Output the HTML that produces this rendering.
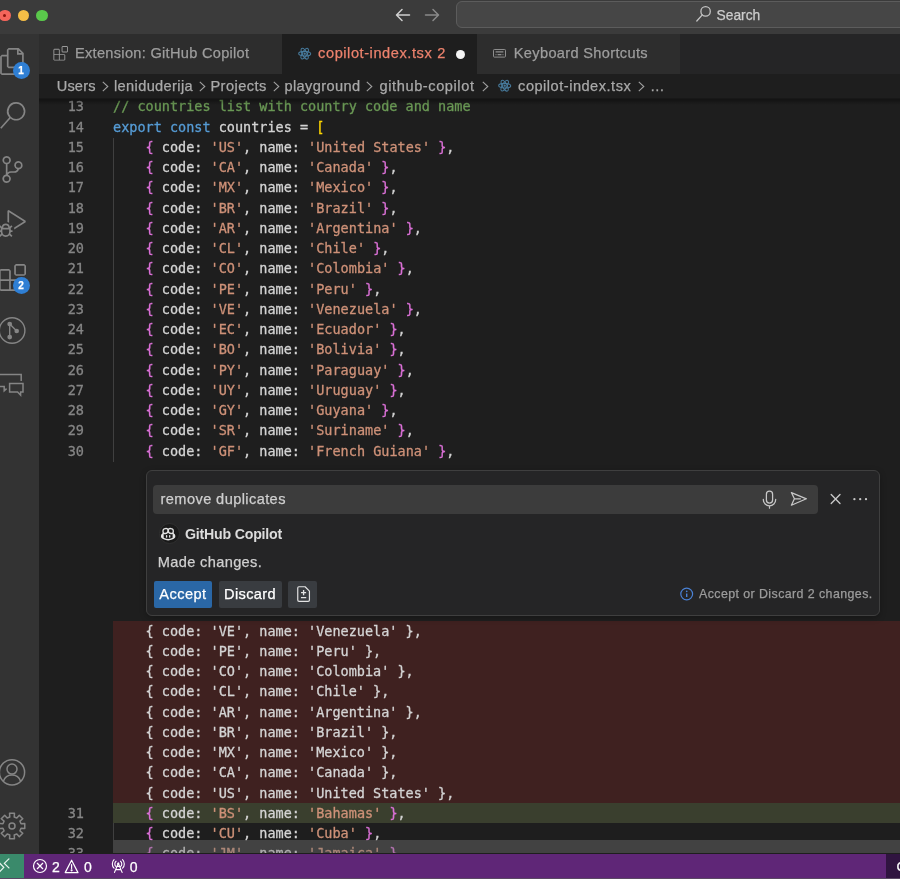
<!DOCTYPE html>
<html><head><meta charset="utf-8"><title>copilot-index.tsx</title>
<style>
*{box-sizing:border-box;margin:0;padding:0}
html,body{width:900px;height:879px;overflow:hidden;background:#1e1e1e}
body{position:relative;will-change:transform;-webkit-text-stroke:0.25px;font-family:"Liberation Sans",sans-serif;color:#ccc}
.abs{position:absolute}
svg{position:absolute;overflow:visible}
#title{left:0;top:0;width:900px;height:34px;background:#3b3b3b}
.tl{position:absolute;top:9.7px;width:11.6px;height:11.6px;border-radius:50%}
#search{left:456px;top:1px;width:470px;height:27px;border-radius:6px;background:#464646;border:1px solid #5c5c5c}
#search span{position:absolute;left:259.5px;top:1.7px;line-height:24.5px;font-size:13.8px;color:#ccc}
#act{left:0;top:34px;width:39px;height:820px;background:#333}
.badge{position:absolute;width:17px;height:17px;border-radius:50%;background:#2f7fd4;color:#fff;font-size:10px;font-weight:bold;text-align:center;line-height:17px}
#tabs{left:39px;top:34px;width:861px;height:40px;background:#252526}
.tab{position:absolute;top:0;height:40px;background:#2d2d2d;font-size:14.5px;line-height:39.2px;color:#9d9d9d;white-space:nowrap}
.tab span{position:absolute;top:0}
.tab.active{background:#1e1e1e;color:#ec826d}
#crumbs{left:39px;top:74px;width:861px;height:24px;background:#1e1e1e;font-size:14.5px;line-height:24px;color:#a9a9a9;white-space:nowrap}
#crumbs span{position:absolute;top:0}
#shadow{left:39px;top:97.5px;width:861px;height:7px;background:linear-gradient(rgba(0,0,0,.15) 0,rgba(0,0,0,.38) 25%,rgba(0,0,0,.2) 55%,rgba(0,0,0,0) 100%)}
#code{left:39px;top:0;width:861px;height:853px;font-family:"DejaVu Sans Mono","Liberation Mono",monospace;font-size:13.5px;line-height:20.25px;color:#d4d4d4;white-space:pre;overflow:hidden;-webkit-text-stroke:0.3px}
.ln{position:absolute;left:0;width:861px;height:20.25px}
.ln .n{position:absolute;left:0;width:45px;text-align:right;color:#858585}
.ln .c{position:absolute;left:74px}
.p{color:#da70d6}.y{color:#ffd700}.s{color:#ce9178}.k{color:#569cd6}.cm{color:#6a9955}.v{color:#d4d4d4}
.bg{position:absolute;left:74.3px;width:790px}
.guide{position:absolute;left:74px;width:1px;background:#404040}
#widget{left:146px;top:470px;width:734px;height:146px;border-radius:6px;background:#252526;border:1px solid #3f3f3f;font-size:14.5px;color:#ccc;box-shadow:0 2px 6px rgba(0,0,0,.25)}
#widget .abs{white-space:nowrap}
.row span,.btn span{position:absolute;top:0}
#input{left:7px;top:14.5px;width:665px;height:28.5px;border-radius:4px;background:#3c3c3c}
.btn{position:absolute;top:110.5px;height:26.5px;border-radius:2px;line-height:26.5px;text-align:center;color:#fff}
#status{left:0;top:853.7px;width:900px;height:24.3px;background:#5f2677;color:#fff;font-size:13.5px;line-height:26px}
#status span{position:absolute;top:0}
</style></head><body>
<div id="title" class="abs">
  <div class="tl" style="left:-1px;background:#f4655b"><div class="abs" style="left:4.1px;top:4.1px;width:3.4px;height:3.4px;border-radius:50%;background:#8a140c"></div></div>
  <div class="tl" style="left:17.7px;background:#f5be46"></div>
  <div class="tl" style="left:36.2px;background:#5ac84b"></div>
  <svg style="left:395px;top:8px" width="46" height="14" viewBox="0 0 46 14" fill="none" stroke-linecap="round" stroke-linejoin="round" stroke-width="1.5"><path d="M7 1.5 L1.5 7 L7 12.5 M1.8 7 H14.5" stroke="#d0d0d0"/><path d="M38 1.5 L43.5 7 L38 12.5 M43.2 7 H30.5" stroke="#8a8a8a"/></svg>
  <div id="search" class="abs"><svg style="left:238px;top:2.5px" width="18" height="18" viewBox="0 0 18 18" fill="none" stroke="#c4c4c4" stroke-width="1.3" stroke-linecap="round"><circle cx="10.6" cy="6.4" r="4.7"/><path d="M7.3 9.9 L1.8 16"/></svg><span>Search</span></div>
</div>
<div id="act" class="abs">
<svg style="left:-1.5px;top:13.5px" width="27" height="27" viewBox="0 0 24 24" fill="#858585"><path d="M17.5 0h-9L7 1.5V6H2.5L1 7.5v15.07L2.5 24h12.07L16 22.57V18h4.7l1.3-1.43V4.5L17.5 0zm0 2.12l2.38 2.38H17.5V2.12zm-3 20.38h-12v-15H7v9.07L8.5 18h6v4.5zm6-6h-12v-15H16V6h4.5v10.5z"/></svg>
<svg style="left:-1.5px;top:67.5px" width="27" height="27" viewBox="0 0 24 24" fill="#858585"><path d="M15.25 0a8.25 8.25 0 0 0-6.18 13.72L1 22.88l1.12 1 8.05-9.12A8.251 8.251 0 1 0 15.25.01V0zm0 15a6.75 6.75 0 1 1 0-13.5 6.75 6.75 0 0 1 0 13.5z"/></svg>
<svg style="left:-1.5px;top:121.5px" width="27" height="27" viewBox="0 0 24 24" fill="#858585"><path d="M21.007 8.222A3.738 3.738 0 0 0 15.045 5.2a3.737 3.737 0 0 0 1.156 6.583 2.988 2.988 0 0 1-2.668 1.67h-2.99a4.456 4.456 0 0 0-2.989 1.165V7.4a3.737 3.737 0 1 0-1.494 0v9.117a3.776 3.776 0 1 0 1.816.099 2.99 2.99 0 0 1 2.668-1.667h2.99a4.484 4.484 0 0 0 4.223-3.039 3.736 3.736 0 0 0 3.25-3.687zM4.565 3.738a2.242 2.242 0 1 1 4.484 0 2.242 2.242 0 0 1-4.484 0zm4.484 16.441a2.242 2.242 0 1 1-4.484 0 2.242 2.242 0 0 1 4.484 0zm8.221-9.715a2.242 2.242 0 1 1 0-4.485 2.242 2.242 0 0 1 0 4.485z"/></svg>
<svg style="left:-1.5px;top:175.5px" width="27" height="27" viewBox="0 0 24 24" fill="#858585"><path d="M10.94 13.5l-1.32 1.32a3.73 3.73 0 0 0-7.24 0L1.06 13.5 0 14.56l1.72 1.72-.22.22V18H0v1.5h1.5v.08c.077.489.214.966.41 1.42L0 22.94 1.06 24l1.65-1.65A4.308 4.308 0 0 0 6 24a4.31 4.31 0 0 0 3.29-1.65L10.94 24 12 22.94 10.09 21c.198-.464.336-.951.41-1.45v-.1H12V18h-1.5v-1.5l-.22-.22L12 14.56l-1.06-1.06zM6 13.5a2.25 2.25 0 0 1 2.25 2.25h-4.5A2.25 2.25 0 0 1 6 13.5zm3 6a3.33 3.33 0 0 1-3 3 3.33 3.33 0 0 1-3-3v-2.25h6v2.25zm14.76-9.9v1.26L13.5 17.37V15.6l8.5-5.37L9 2v9.46a5.07 5.07 0 0 0-1.5-.72V.63L8.64 0l15.12 9.6z"/></svg>
<svg style="left:-1.5px;top:229.5px" width="27" height="27" viewBox="0 0 24 24" fill="#858585"><path d="M13.5 1.5L15 0h7.5L24 1.5V9l-1.5 1.5H15L13.5 9V1.5zm1.5 0V9h7.5V1.5H15zM0 15V6l1.5-1.5H9L10.5 6v7.5H18l1.5 1.5v7.5L18 24H1.5L0 22.5V15zm9-1.5V6H1.5v7.5H9zM9 15H1.5v7.5H9V15zm1.5 7.5H18V15h-7.5v7.5z"/></svg>
<svg style="left:0;top:0" width="39" height="820"><g fill="none" stroke="#858585" stroke-width="1.4"><circle cx="12.1" cy="296.5" r="12.8"/><path d="M9.7 290.1 V303.1 M9.7 290.1 L16.7 297.0"/></g><g fill="#858585"><circle cx="9.7" cy="290.1" r="2.4"/><circle cx="16.7" cy="297.0" r="2.3"/><circle cx="9.7" cy="303.1" r="2.4"/></g>
<g fill="none" stroke="#858585" stroke-width="1.5" stroke-linejoin="miter"><path d="M21.2 347.0 V340.6 H-1 V352.4 H4.2 V356.8 L6.6 354.6"/><path d="M9.6 349.6 H23 V358.0 H20.6 V361.2 L17.6 358.0 H9.6 Z"/></g>
<g fill="none" stroke="#858585" stroke-width="1.5"><circle cx="12" cy="738.3" r="12.6"/><circle cx="12" cy="735.1" r="5"/><path d="M3.4 747.3 A9 9 0 0 1 20.6 747.3"/></g>
<g fill="none" stroke="#858585" stroke-width="1.5" stroke-linejoin="round"><path d="M9.79 782.97 L9.54 779.23 L14.46 779.23 L14.21 782.97 L16.82 784.05 L19.29 781.24 L22.76 784.71 L19.95 787.18 L21.03 789.79 L24.77 789.54 L24.77 794.46 L21.03 794.21 L19.95 796.82 L22.76 799.29 L19.29 802.76 L16.82 799.95 L14.21 801.03 L14.46 804.77 L9.54 804.77 L9.79 801.03 L7.18 799.95 L4.71 802.76 L1.24 799.29 L4.05 796.82 L2.97 794.21 L-0.77 794.46 L-0.77 789.54 L2.97 789.79 L4.05 787.18 L1.24 784.71 L4.71 781.24 L7.18 784.05 Z"/><circle cx="12.0" cy="792.0" r="3"/></g></svg>
<div class="badge" style="left:12.5px;top:27.9px">1</div>
<div class="badge" style="left:12.5px;top:243.0px">2</div>
</div>
<div id="tabs" class="abs">
<div class="tab" style="left:0;width:242.6px"><svg style="left:14.1px;top:12.0px" width="15.4" height="14.6" viewBox="0 0 24 24" fill="#9a9a9a"><path d="M13.5 1.5L15 0h7.5L24 1.5V9l-1.5 1.5H15L13.5 9V1.5zm1.5 0V9h7.5V1.5H15zM0 15V6l1.5-1.5H9L10.5 6v7.5H18l1.5 1.5v7.5L18 24H1.5L0 22.5V15zm9-1.5V6H1.5v7.5H9zM9 15H1.5v7.5H9V15zm1.5 7.5H18V15h-7.5v7.5z"/></svg><span style="left:36.0px;font-size:14.6px;letter-spacing:0.29px;">Extension: GitHub Copilot</span></div>
<div class="tab active" style="left:242.6px;width:195.2px"><svg style="left:16.5px;top:13.1px" width="13.4" height="13.4" viewBox="-8 -8 16 16" fill="none" stroke="#477a9c" stroke-width="1.25"><ellipse rx="7.2" ry="2.8"/><ellipse rx="7.2" ry="2.8" transform="rotate(60)"/><ellipse rx="7.2" ry="2.8" transform="rotate(120)"/><circle r="1.4" fill="#477a9c" stroke="none"/></svg><span style="left:36.5px;font-size:14.6px;letter-spacing:0.56px;">copilot-index.tsx</span><span style="left:155.7px;font-size:14.6px;letter-spacing:-1.12px;">2</span><div class="abs" style="left:174.6px;top:15.5px;width:9px;height:9px;border-radius:50%;background:#f4f4f4"></div></div>
<div class="tab" style="left:437.8px;width:203.2px"><svg style="left:16.6px;top:14.8px" width="13" height="8.6" viewBox="0 0 13 8.6" fill="none" stroke="#8f8f8f" stroke-width="1"><rect x=".5" y=".5" width="12" height="7.6" rx=".8"/><path d="M2.6 2.9H10.4M2.6 5.6H3.4M4.6 5.6H8.4M9.6 5.6H10.4" stroke-width="1.1"/></svg><span style="left:37.0px;font-size:14.6px;letter-spacing:0.33px;">Keyboard Shortcuts</span></div>
</div>
<div id="crumbs" class="abs">
<span style="left:17.7px;font-size:14.6px;letter-spacing:0.17px;">Users</span>
<svg style="left:63.4px;top:7px" width="7" height="11" viewBox="0 0 7 11" fill="none" stroke="#a0a0a0" stroke-width="1.1"><path d="M.8 .8 L5.8 5.5 L.8 10.2"/></svg>
<span style="left:75.0px;font-size:14.6px;letter-spacing:0.36px;">leniduderija</span>
<svg style="left:160.0px;top:7px" width="7" height="11" viewBox="0 0 7 11" fill="none" stroke="#a0a0a0" stroke-width="1.1"><path d="M.8 .8 L5.8 5.5 L.8 10.2"/></svg>
<span style="left:171.4px;font-size:14.6px;letter-spacing:0.45px;">Projects</span>
<svg style="left:233.6px;top:7px" width="7" height="11" viewBox="0 0 7 11" fill="none" stroke="#a0a0a0" stroke-width="1.1"><path d="M.8 .8 L5.8 5.5 L.8 10.2"/></svg>
<span style="left:245.4px;font-size:14.6px;letter-spacing:0.38px;">playground</span>
<svg style="left:327.0px;top:7px" width="7" height="11" viewBox="0 0 7 11" fill="none" stroke="#a0a0a0" stroke-width="1.1"><path d="M.8 .8 L5.8 5.5 L.8 10.2"/></svg>
<span style="left:340.6px;font-size:14.6px;letter-spacing:0.58px;">github-copilot</span>
<svg style="left:442.8px;top:7px" width="7" height="11" viewBox="0 0 7 11" fill="none" stroke="#a0a0a0" stroke-width="1.1"><path d="M.8 .8 L5.8 5.5 L.8 10.2"/></svg>
<svg style="left:458.6px;top:5.1px" width="13.4" height="13.4" viewBox="-8 -8 16 16" fill="none" stroke="#477a9c" stroke-width="1.25"><ellipse rx="7.2" ry="2.8"/><ellipse rx="7.2" ry="2.8" transform="rotate(60)"/><ellipse rx="7.2" ry="2.8" transform="rotate(120)"/><circle r="1.4" fill="#477a9c" stroke="none"/></svg>
<span style="left:479.1px;font-size:14.6px;letter-spacing:0.50px;">copilot-index.tsx</span>
<svg style="left:599.2px;top:7px" width="7" height="11" viewBox="0 0 7 11" fill="none" stroke="#a0a0a0" stroke-width="1.1"><path d="M.8 .8 L5.8 5.5 L.8 10.2"/></svg>
<span style="left:610.9px;font-size:14.6px;letter-spacing:-4.69px;">…</span>
</div>
<div id="code" class="abs">
  <div class="bg" style="top:620.6px;height:182.25px;background:#3f2120"></div>
  <div class="bg" style="top:802.85px;height:20.25px;background:#3a3f2e"></div>
  <div class="guide" style="top:137.6px;height:324px"></div>
  <div class="guide" style="top:823.1px;height:17px"></div>
<div class="ln" style="top:96.3px"><span class="n">13</span><span class="c"><span class="cm">// countries list with country code and name</span></span></div>
<div class="ln" style="top:116.5px"><span class="n">14</span><span class="c"><span class="k">export</span> <span class="k">const</span> <span class="v">countries</span> = <span class="y">[</span></span></div>
<div class="ln" style="top:136.8px"><span class="n">15</span><span class="c">    <span class="p">{</span> code: <span class="s">'US'</span>, name: <span class="s">'United States'</span> <span class="p">}</span>,</span></div>
<div class="ln" style="top:157.1px"><span class="n">16</span><span class="c">    <span class="p">{</span> code: <span class="s">'CA'</span>, name: <span class="s">'Canada'</span> <span class="p">}</span>,</span></div>
<div class="ln" style="top:177.3px"><span class="n">17</span><span class="c">    <span class="p">{</span> code: <span class="s">'MX'</span>, name: <span class="s">'Mexico'</span> <span class="p">}</span>,</span></div>
<div class="ln" style="top:197.6px"><span class="n">18</span><span class="c">    <span class="p">{</span> code: <span class="s">'BR'</span>, name: <span class="s">'Brazil'</span> <span class="p">}</span>,</span></div>
<div class="ln" style="top:217.8px"><span class="n">19</span><span class="c">    <span class="p">{</span> code: <span class="s">'AR'</span>, name: <span class="s">'Argentina'</span> <span class="p">}</span>,</span></div>
<div class="ln" style="top:238.1px"><span class="n">20</span><span class="c">    <span class="p">{</span> code: <span class="s">'CL'</span>, name: <span class="s">'Chile'</span> <span class="p">}</span>,</span></div>
<div class="ln" style="top:258.3px"><span class="n">21</span><span class="c">    <span class="p">{</span> code: <span class="s">'CO'</span>, name: <span class="s">'Colombia'</span> <span class="p">}</span>,</span></div>
<div class="ln" style="top:278.6px"><span class="n">22</span><span class="c">    <span class="p">{</span> code: <span class="s">'PE'</span>, name: <span class="s">'Peru'</span> <span class="p">}</span>,</span></div>
<div class="ln" style="top:298.8px"><span class="n">23</span><span class="c">    <span class="p">{</span> code: <span class="s">'VE'</span>, name: <span class="s">'Venezuela'</span> <span class="p">}</span>,</span></div>
<div class="ln" style="top:319.1px"><span class="n">24</span><span class="c">    <span class="p">{</span> code: <span class="s">'EC'</span>, name: <span class="s">'Ecuador'</span> <span class="p">}</span>,</span></div>
<div class="ln" style="top:339.3px"><span class="n">25</span><span class="c">    <span class="p">{</span> code: <span class="s">'BO'</span>, name: <span class="s">'Bolivia'</span> <span class="p">}</span>,</span></div>
<div class="ln" style="top:359.6px"><span class="n">26</span><span class="c">    <span class="p">{</span> code: <span class="s">'PY'</span>, name: <span class="s">'Paraguay'</span> <span class="p">}</span>,</span></div>
<div class="ln" style="top:379.8px"><span class="n">27</span><span class="c">    <span class="p">{</span> code: <span class="s">'UY'</span>, name: <span class="s">'Uruguay'</span> <span class="p">}</span>,</span></div>
<div class="ln" style="top:400.1px"><span class="n">28</span><span class="c">    <span class="p">{</span> code: <span class="s">'GY'</span>, name: <span class="s">'Guyana'</span> <span class="p">}</span>,</span></div>
<div class="ln" style="top:420.3px"><span class="n">29</span><span class="c">    <span class="p">{</span> code: <span class="s">'SR'</span>, name: <span class="s">'Suriname'</span> <span class="p">}</span>,</span></div>
<div class="ln" style="top:440.6px"><span class="n">30</span><span class="c">    <span class="p">{</span> code: <span class="s">'GF'</span>, name: <span class="s">'French Guiana'</span> <span class="p">}</span>,</span></div>
<div class="ln" style="top:620.6px"><span class="n"></span><span class="c">    { code: 'VE', name: 'Venezuela' },</span></div>
<div class="ln" style="top:640.9px"><span class="n"></span><span class="c">    { code: 'PE', name: 'Peru' },</span></div>
<div class="ln" style="top:661.1px"><span class="n"></span><span class="c">    { code: 'CO', name: 'Colombia' },</span></div>
<div class="ln" style="top:681.4px"><span class="n"></span><span class="c">    { code: 'CL', name: 'Chile' },</span></div>
<div class="ln" style="top:701.6px"><span class="n"></span><span class="c">    { code: 'AR', name: 'Argentina' },</span></div>
<div class="ln" style="top:721.9px"><span class="n"></span><span class="c">    { code: 'BR', name: 'Brazil' },</span></div>
<div class="ln" style="top:742.1px"><span class="n"></span><span class="c">    { code: 'MX', name: 'Mexico' },</span></div>
<div class="ln" style="top:762.4px"><span class="n"></span><span class="c">    { code: 'CA', name: 'Canada' },</span></div>
<div class="ln" style="top:782.6px"><span class="n"></span><span class="c">    { code: 'US', name: 'United States' },</span></div>
<div class="ln" style="top:802.9px"><span class="n">31</span><span class="c">    <span class="p">{</span> code: <span class="s">'BS'</span>, name: <span class="s">'Bahamas'</span> <span class="p">}</span>,</span></div>
<div class="ln" style="top:823.1px"><span class="n">32</span><span class="c">    <span class="p">{</span> code: <span class="s">'CU'</span>, name: <span class="s">'Cuba'</span> <span class="p">}</span>,</span></div>
<div class="ln" style="top:843.4px"><span class="n">33</span><span class="c">    <span class="p">{</span> code: <span class="s">'JM'</span>, name: <span class="s">'Jamaica'</span> <span class="p">}</span>,</span></div>
  <div class="bg" style="top:840px;height:14px;background:rgba(121,121,121,.4)"></div>
</div>
<div id="shadow" class="abs"></div>
<div id="widget" class="abs">
<div id="input" class="abs" style="left:6.4px;top:13.6px;width:664.8px;height:29.4px"></div>
<div class="abs row" style="left:0;top:18.4px;height:20.0px;line-height:20.0px;color:#cfcfcf"><span style="left:13.6px;font-size:14.6px;letter-spacing:0.40px;">remove duplicates</span></div>
<div class="abs" style="left:11.5px;top:52.0px;width:21px;height:21px;border-radius:50%;background:#1a1a1a;border:1px solid #303030"></div>
<svg style="left:13.9px;top:56.2px" width="14.3" height="14.3" viewBox="0 0 16 16" fill="#e4e4e4" fill-rule="evenodd"><path d="M6.25 9a.75.75 0 0 1 .75.75v1.5a.75.75 0 0 1-1.5 0v-1.5A.75.75 0 0 1 6.25 9zm4.25.75a.75.75 0 0 0-1.5 0v1.5a.75.75 0 0 0 1.5 0v-1.5zM7.86 1.77c.05.053.097.107.14.164.043-.057.09-.111.14-.164.681-.731 1.737-.9 2.943-.765 1.23.136 2.145.527 2.724 1.26.566.716.693 1.614.693 2.485 0 .572-.053 1.147-.254 1.655l.168.838.066.033A2.75 2.75 0 0 1 16 9.736V11c0 .24-.086.438-.156.567a2.173 2.173 0 0 1-.259.366c-.18.21-.404.413-.605.58a10.373 10.373 0 0 1-.792.597l-.015.01-.006.004-.028.018a8.832 8.832 0 0 1-.456.281c-.307.177-.749.41-1.296.642C11.296 14.528 9.756 15 8 15c-1.756 0-3.296-.472-4.387-.935a12.06 12.06 0 0 1-1.296-.641 8.849 8.849 0 0 1-.456-.281l-.028-.02-.006-.003-.015-.01a7.077 7.077 0 0 1-.235-.166 10.327 10.327 0 0 1-.557-.43 4.771 4.771 0 0 1-.605-.58 2.174 2.174 0 0 1-.259-.367A1.19 1.19 0 0 1 0 11V9.736a2.75 2.75 0 0 1 1.52-2.46l.067-.033.167-.838C1.553 5.897 1.5 5.322 1.5 4.75c0-.87.127-1.77.693-2.485.579-.733 1.494-1.124 2.724-1.26 1.206-.134 2.262.034 2.944.765zM3.024 7.709L3 7.824v4.261c.02.013.043.025.065.038.264.152.65.356 1.134.562.972.412 2.307.815 3.801.815 1.494 0 2.830-.403 3.801-.815a10.56 10.56 0 0 0 1.134-.562l.065-.038V7.824l-.023-.116c-.49.21-1.075.291-1.727.291-1.146 0-2.060-.327-2.71-.991A3.222 3.222 0 0 1 8 6.303a3.220 3.220 0 0 1-.54.705C6.810 7.672 5.896 8 4.750 8c-.652 0-1.236-.082-1.726-.291zm3.736-4.918c-.239-.256-.727-.426-1.679-.32-1.028.114-1.487.411-1.710.694-.237.300-.371.747-.371 1.555 0 .792.129 1.171.308 1.371.162.181.519.379 1.442.379.853 0 1.339-.235 1.638-.540.315-.322.527-.827.617-1.553.117-.935-.037-1.395-.245-1.586zm2.480 0c-.208.223-.362.651-.245 1.586.09.726.302 1.231.617 1.553.299.305.785.540 1.638.540.922 0 1.280-.198 1.442-.379.179-.200.308-.579.308-1.371 0-.808-.134-1.255-.371-1.555-.223-.283-.682-.580-1.710-.694-.952-.106-1.440.064-1.679.320z"/></svg>
<div class="abs row" style="left:0;top:53.0px;height:20.0px;line-height:20.0px;color:#dcdcdc"><span style="left:38.0px;font-size:14.2px;letter-spacing:-0.22px;font-weight:bold;-webkit-text-stroke:0;">GitHub Copilot</span></div>
<div class="abs row" style="left:0;top:81.2px;height:20.0px;line-height:20.0px;color:#d0d0d0"><span style="left:10.8px;font-size:14.6px;letter-spacing:0.35px;">Made changes.</span></div>
<div class="btn" style="left:6.8px;width:58.4px;top:110.2px;height:26.6px;line-height:26.2px;background:#2a67a6"><span style="left:5.4px;font-size:14.6px;letter-spacing:0.47px;">Accept</span></div>
<div class="btn" style="left:71.9px;width:62.7px;top:110.2px;height:26.6px;line-height:26.2px;background:#393c40"><span style="left:5.1px;font-size:14.6px;letter-spacing:0.36px;">Discard</span></div>
<div class="btn" style="left:141.2px;width:28.8px;top:110.2px;height:26.6px;line-height:26.2px;background:#393c40"><svg style="left:8.4px;top:4.5px" width="13.2" height="16.2" viewBox="0 0 14 17" fill="none" stroke="#e4e4e4" stroke-width="1.25" stroke-linejoin="round"><path d="M2 .7 H8.6 L13.2 5.3 V14.8 Q13.2 16.2 11.8 16.2 H2.2 Q.8 16.2 .8 14.8 V2 Q.8 .7 2 .7Z"/><path d="M7 4.2 V9.6 M4.3 6.9 H9.7 M4.2 12.3 H9.8" stroke-width="1.4"/></svg></div>
<svg style="left:0;top:0" width="732" height="144" fill="none" stroke="#c8c8c8" stroke-width="1.25" stroke-linecap="round" stroke-linejoin="round"><g transform="translate(622.5 28.4)"><rect x="-3.1" y="-8.2" width="6.2" height="11.8" rx="3.1"/><path d="M-6.2 0 V.2 A6.2 6.2 0 0 0 6.2 .2 V0 M0 6.4 V8.8"/></g><path d="M644.4 21.6 L659.4 27.8 L644.4 34.2 L647.4 27.8 Z M647.4 27.8 H653.4"/><path d="M684.2 23.5 L693.0 32.5 M693.0 23.5 L684.2 32.5" stroke-width="1.35"/><g fill="#c8c8c8" stroke="none"><circle cx="707.4" cy="28.2" r="1.15"/><circle cx="713.2" cy="28.2" r="1.15"/><circle cx="719.0" cy="28.2" r="1.15"/></g><g transform="translate(539.7 123.0)"><circle r="5.9" stroke="#4a82d6" stroke-width="1.2"/><path d="M0 -.6 V3" stroke="#4a82d6" stroke-width="1.4" stroke-linecap="butt"/><circle cy="-2.7" r=".85" fill="#4a82d6" stroke="none"/></g></svg>
<div class="abs row" style="left:0;top:114.3px;height:18.0px;line-height:18.0px;color:#9c9c9c"><span style="left:552.0px;font-size:12.4px;letter-spacing:0.42px;">Accept or Discard 2 changes.</span></div>
</div>
<div id="status" class="abs">
<div class="abs" style="left:0;top:0;width:23.6px;height:24.3px;background:#3a8a6b"></div>
<svg style="left:0;top:0.3px" width="160" height="25" fill="none" stroke="#fff" stroke-width="1.2" stroke-linejoin="round" stroke-linecap="round"><path d="M-1 8.4 L3.8 13.4 L-1 18.4 M8.9 4.9 L4.3 9.4 L8.9 13.9" stroke="#e8f4ee" stroke-width="1.3"/><circle cx="40" cy="12" r="6.5"/><path d="M37 9 L43 15 M43 9 L37 15" stroke-linecap="butt" stroke-width="1.3"/><path d="M71.6 6.2 L78 18.6 H65.2 Z M71.6 10.6 V14.4" /><circle cx="71.6" cy="16.3" r=".5" fill="#fff"/><path d="M118.3 9.2 L114.5 18.4 M118.3 9.2 L122.1 18.4 M115.9 15.6 H120.7 M117 12.4 H119.6" stroke-width="1.15"/><circle cx="118.3" cy="9.6" r="1.1" fill="#fff" stroke="none"/><path d="M116.05 12.58 A3.5 3.5 0 0 1 116.05 7.22 M120.55 12.58 A3.5 3.5 0 0 0 120.55 7.22 M114.06 14.14 A6.0 6.0 0 0 1 114.06 5.66 M122.54 14.14 A6.0 6.0 0 0 0 122.54 5.66" stroke-width="1.1"/></svg>
<span style="left:52.0px;font-size:14px;letter-spacing:-1.10px;">2</span>
<span style="left:84.0px;font-size:14px;letter-spacing:-0.30px;">0</span>
<span style="left:129.8px;font-size:14px;letter-spacing:-0.40px;">0</span>
<div class="abs" style="left:886px;top:0;width:14px;height:24.3px;background:#301440"></div>
<span style="left:896.4px;font-size:13.6px">C</span>
</div>
<div class="abs" style="left:0;top:878px;width:900px;height:1px;background:#5a4864"></div>
</body></html>
